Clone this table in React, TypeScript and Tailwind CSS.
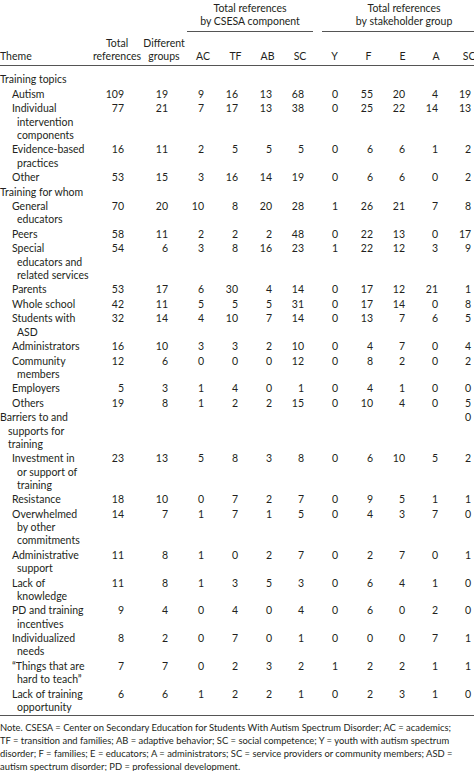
import * as React from 'react'

type Row = {
  lines: string[];
  top?: boolean;
  vals?: (number | string)[];
};

const rows: Row[] = [
  { lines: ["Training topics"], top: true },
  { lines: ["Autism"], vals: [109, 19, 9, 16, 13, 68, 0, 55, 20, 4, 19] },
  { lines: ["Individual", "intervention", "components"], vals: [77, 21, 7, 17, 13, 38, 0, 25, 22, 14, 13] },
  { lines: ["Evidence-based", "practices"], vals: [16, 11, 2, 5, 5, 5, 0, 6, 6, 1, 2] },
  { lines: ["Other"], vals: [53, 15, 3, 16, 14, 19, 0, 6, 6, 0, 2] },
  { lines: ["Training for whom"], top: true },
  { lines: ["General", "educators"], vals: [70, 20, 10, 8, 20, 28, 1, 26, 21, 7, 8] },
  { lines: ["Peers"], vals: [58, 11, 2, 2, 2, 48, 0, 22, 13, 0, 17] },
  { lines: ["Special", "educators and", "related services"], vals: [54, 6, 3, 8, 16, 23, 1, 22, 12, 3, 9] },
  { lines: ["Parents"], vals: [53, 17, 6, 30, 4, 14, 0, 17, 12, 21, 1] },
  { lines: ["Whole school"], vals: [42, 11, 5, 5, 5, 31, 0, 17, 14, 0, 8] },
  { lines: ["Students with", "ASD"], vals: [32, 14, 4, 10, 7, 14, 0, 13, 7, 6, 5] },
  { lines: ["Administrators"], vals: [16, 10, 3, 3, 2, 10, 0, 4, 7, 0, 4] },
  { lines: ["Community", "members"], vals: [12, 6, 0, 0, 0, 12, 0, 8, 2, 0, 2] },
  { lines: ["Employers"], vals: [5, 3, 1, 4, 0, 1, 0, 4, 1, 0, 0] },
  { lines: ["Others"], vals: [19, 8, 1, 2, 2, 15, 0, 10, 4, 0, 5] },
  { lines: ["Barriers to and", "supports for", "training"], top: true, vals: ["", "", "", "", "", "", "", "", "", "", 0] },
  { lines: ["Investment in", "or support of", "training"], vals: [23, 13, 5, 8, 3, 8, 0, 6, 10, 5, 2] },
  { lines: ["Resistance"], vals: [18, 10, 0, 7, 2, 7, 0, 9, 5, 1, 1] },
  { lines: ["Overwhelmed", "by other", "commitments"], vals: [14, 7, 1, 7, 1, 5, 0, 4, 3, 7, 0] },
  { lines: ["Administrative", "support"], vals: [11, 8, 1, 0, 2, 7, 0, 2, 7, 0, 1] },
  { lines: ["Lack of", "knowledge"], vals: [11, 8, 1, 3, 5, 3, 0, 6, 4, 1, 0] },
  { lines: ["PD and training", "incentives"], vals: [9, 4, 0, 4, 0, 4, 0, 6, 0, 2, 0] },
  { lines: ["Individualized", "needs"], vals: [8, 2, 0, 7, 0, 1, 0, 0, 0, 7, 1] },
  { lines: ["\u201cThings that are", "hard to teach\u201d"], vals: [7, 7, 0, 2, 3, 2, 1, 2, 2, 1, 1] },
  { lines: ["Lack of training", "opportunity"], vals: [6, 6, 1, 2, 2, 1, 0, 2, 3, 1, 0] },
];

// column widths and right padding for the numbers
const widths = ["w-[93px]", "w-[48px]", "w-[46px]", "w-[32px]", "w-[33px]", "w-[31px]", "w-[34px]", "w-[35px]", "w-[33px]", "w-[35px]", "w-[32px]", "w-[34px]"];
const pads = ["pr-[17px]", "pr-[19px]", "pr-[15px]", "pr-[14px]", "pr-[11px]", "pr-[13px]", "pr-[14px]", "pr-[12px]", "pr-[15px]", "pr-[14px]", "pr-[15px]"];
const subHeads = ["AC", "TF", "AB", "SC", "Y", "F", "E", "A", "SC"];

export default function App() {
  return (
    <div className="w-[474px] h-[771px] overflow-hidden bg-white text-[#231f20] font-['Lato',sans-serif]">
      <table className="table-fixed border-collapse w-[486px] text-[10.5px] leading-[13.25px]">
        <colgroup>
          {widths.map((w, i) => (
            <col key={i} className={w} />
          ))}
        </colgroup>
        <thead>
          <tr>
            <th colSpan={3} />
            <th colSpan={4} className="font-normal pt-[1.5px] align-bottom">
              <div className="mr-[4px] border-b border-[#555] pb-[3px] text-center">
                Total references<br />by CSESA component
              </div>
            </th>
            <th colSpan={5} className="font-normal pt-[1.5px] align-bottom">
              <div className="ml-[5px] border-b border-[#555] pb-[3px] text-center">
                Total references<br />by stakeholder group
              </div>
            </th>
          </tr>
          <tr className="border-b border-[#555]">
            <th className="font-normal text-left align-bottom pt-[4.5px] pb-[2px]">Theme</th>
            <th className="font-normal text-center align-bottom pt-[4.5px] pb-[2px] whitespace-nowrap">
              Total<br />references
            </th>
            <th className="font-normal text-center align-bottom pt-[4.5px] pb-[2px] whitespace-nowrap">
              Different<br />groups
            </th>
            {subHeads.map((h, i) => (
              <th key={i} className="font-normal text-center align-bottom pt-[4.5px] pb-[2px]">
                {h}
              </th>
            ))}
          </tr>
        </thead>
        <tbody className="border-b border-[#555]">
          {rows.map((r, ri) => {
            const first = ri === 0;
            const last = ri === rows.length - 1;
            const py = first ? "pt-[7.4px] pb-[0.64px]" : last ? "pt-[0.64px] pb-[0.4px]" : "py-[0.64px]";
            return (
              <tr key={ri}>
                <td className={`${py} align-top whitespace-nowrap`}>
                  {r.lines.map((l, li) => (
                    <div
                      key={li}
                      className={
                        r.top
                          ? li === 0
                            ? "pl-0"
                            : "pl-[8px]"
                          : li === 0
                          ? "pl-[12px]"
                          : "pl-[17px]"
                      }
                    >
                      {l}
                    </div>
                  ))}
                </td>
                {Array.from({ length: 11 }).map((_, ci) => (
                  <td key={ci} className={`${py} ${pads[ci]} align-top text-right`}>
                    {r.vals ? r.vals[ci] : ""}
                  </td>
                ))}
              </tr>
            );
          })}
        </tbody>
      </table>
      <p className="mt-[5px] text-[9.4px] leading-[13.2px] whitespace-nowrap">
        Note. CSESA = Center on Secondary Education for Students With Autism Spectrum Disorder; AC = academics;
        <br />
        TF = transition and families; AB = adaptive behavior; SC = social competence; Y = youth with autism spectrum
        <br />
        disorder; F = families; E = educators; A = administrators; SC = service providers or community members; ASD =
        <br />
        autism spectrum disorder; PD = professional development.
      </p>
    </div>
  );
}
